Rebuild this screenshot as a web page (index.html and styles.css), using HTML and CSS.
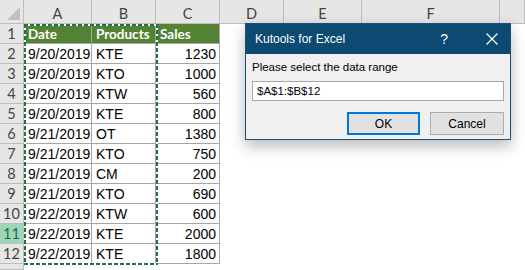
FILE: index.html
```html
<!DOCTYPE html>
<html lang="en">
<head>
  <meta charset="UTF-8">
  <meta name="viewport" content="width=device-width, initial-scale=1.0">
  <title>Kutools for Excel - Select Range</title>
  <link rel="stylesheet" href="styles.css">
</head>
<body>
  <div class="sheet">
    <!-- column headers -->
    <div class="hd corner"><span class="corner-tri"></span></div>
    <div class="hd col">A</div>
    <div class="hd col">B</div>
    <div class="hd col">C</div>
    <div class="hd col">D</div>
    <div class="hd col">E</div>
    <div class="hd col">F</div>
    <div class="hd col"></div>

    <!-- row 1 -->
    <div class="hd row">1</div>
    <div class="cell head">Date</div>
    <div class="cell head">Products</div>
    <div class="cell head">Sales</div>
    <div class="blank"></div><div class="blank"></div><div class="blank"></div><div class="blank"></div>

    <div class="hd row">2</div>
    <div class="cell">9/20/2019</div><div class="cell">KTE</div><div class="cell num">1230</div>
    <div class="blank"></div><div class="blank"></div><div class="blank"></div><div class="blank"></div>

    <div class="hd row">3</div>
    <div class="cell">9/20/2019</div><div class="cell">KTO</div><div class="cell num">1000</div>
    <div class="blank"></div><div class="blank"></div><div class="blank"></div><div class="blank"></div>

    <div class="hd row">4</div>
    <div class="cell">9/20/2019</div><div class="cell">KTW</div><div class="cell num">560</div>
    <div class="blank"></div><div class="blank"></div><div class="blank"></div><div class="blank"></div>

    <div class="hd row">5</div>
    <div class="cell">9/20/2019</div><div class="cell">KTE</div><div class="cell num">800</div>
    <div class="blank"></div><div class="blank"></div><div class="blank"></div><div class="blank"></div>

    <div class="hd row">6</div>
    <div class="cell">9/21/2019</div><div class="cell">OT</div><div class="cell num">1380</div>
    <div class="blank"></div><div class="blank"></div><div class="blank"></div><div class="blank"></div>

    <div class="hd row">7</div>
    <div class="cell">9/21/2019</div><div class="cell">KTO</div><div class="cell num">750</div>
    <div class="blank"></div><div class="blank"></div><div class="blank"></div><div class="blank"></div>

    <div class="hd row">8</div>
    <div class="cell">9/21/2019</div><div class="cell">CM</div><div class="cell num">200</div>
    <div class="blank"></div><div class="blank"></div><div class="blank"></div><div class="blank"></div>

    <div class="hd row">9</div>
    <div class="cell">9/21/2019</div><div class="cell">KTO</div><div class="cell num">690</div>
    <div class="blank"></div><div class="blank"></div><div class="blank"></div><div class="blank"></div>

    <div class="hd row">10</div>
    <div class="cell">9/22/2019</div><div class="cell">KTW</div><div class="cell num">600</div>
    <div class="blank"></div><div class="blank"></div><div class="blank"></div><div class="blank"></div>

    <div class="hd row active">11</div>
    <div class="cell">9/22/2019</div><div class="cell">KTE</div><div class="cell num">2000</div>
    <div class="blank"></div><div class="blank"></div><div class="blank"></div><div class="blank"></div>

    <div class="hd row">12</div>
    <div class="cell">9/22/2019</div><div class="cell">KTE</div><div class="cell num">1800</div>
    <div class="blank"></div><div class="blank"></div><div class="blank"></div><div class="blank"></div>

    <div class="hd row"></div>

    <!-- copy selection marquee around A1:B12 -->
    <div class="ants"></div>
  </div>

  <div class="dialog">
    <div class="dialog-title">
      <span class="dialog-name">Kutools for Excel</span>
      <span class="dialog-help">?</span>
      <svg class="dialog-close" width="12" height="12" viewBox="0 0 12 12">
        <path d="M0.5 0.5 L11.5 11.5 M11.5 0.5 L0.5 11.5" stroke="#fff" stroke-width="1.2" fill="none"/>
      </svg>
    </div>
    <div class="dialog-body">
      <label class="dialog-label">Please select the data range</label>
      <div class="dialog-input">$A$1:$B$12</div>
      <div class="dialog-buttons">
        <button class="btn btn-default">OK</button>
        <button class="btn">Cancel</button>
      </div>
    </div>
  </div>
</body>
</html>
```

FILE: styles.css
```css
html, body {
  margin: 0;
  height: 100%;
  background: #fff;
  overflow: hidden;
}

.sheet {
  position: relative;
  height: 270px;
  display: grid;
  grid-template-columns: 24px 68px 64px 64px 64px 78px 138px 1fr;
  grid-template-rows: 24px repeat(12, 20px) 1fr;
  font-family: "Liberation Sans", Arial, sans-serif;
  font-size: 14px;
  color: #000;
}

.hd {
  box-sizing: border-box;
  background: #e6e6e6;
  color: #444;
  font-family: Lato, "Liberation Sans", sans-serif;
  font-size: 14.5px;
  border-right: 1px solid #bdbdbd;
  border-bottom: 1px solid #bdbdbd;
  display: flex;
  align-items: center;
  justify-content: center;
}

.hd.col {
  padding-top: 3px;
}

.hd.corner {
  position: relative;
}

.corner-tri {
  position: absolute;
  right: 3px;
  bottom: 3px;
  width: 0;
  height: 0;
  border-left: 13px solid transparent;
  border-bottom: 13px solid #c0c0c0;
}

.hd.row.active {
  background: #9fd5b7;
  color: #1e6b41;
}

.cell {
  box-sizing: border-box;
  border-right: 1px solid #a6a6a6;
  border-bottom: 1px solid #a6a6a6;
  padding: 1px 3px 0 4px;
  display: flex;
  align-items: center;
  white-space: nowrap;
  overflow: hidden;
}

.cell.head {
  background: #548235;
  color: #fff;
  font-family: Lato, "Liberation Sans", sans-serif;
  font-weight: bold;
  font-size: 13.5px;
}

.cell.num {
  justify-content: flex-end;
}

.blank {
  background: #fff;
}

/* marching ants: green dashes over white */
.ants {
  position: absolute;
  left: 24px;
  top: 24px;
  width: 134px;
  height: 241px;
  background:
    repeating-linear-gradient(90deg, #217346 0 4px, #fff 4px 6px) left top / 100% 2px no-repeat,
    repeating-linear-gradient(90deg, #217346 0 4px, #fff 4px 6px) left bottom / 100% 2px no-repeat,
    repeating-linear-gradient(180deg, #217346 0 4px, #fff 4px 6px) left top / 2px 100% no-repeat,
    repeating-linear-gradient(180deg, #217346 0 4px, #fff 4px 6px) right top / 2px 100% no-repeat;
}

/* dialog window over the sheet */
.dialog {
  position: absolute;
  left: 245px;
  top: 23px;
  width: 266px;
  height: 117px;
  box-sizing: border-box;
  border: 1px solid #1b5078;
  background: #f0f0f0;
  box-shadow: 0 6px 14px rgba(0, 0, 0, 0.28);
  font-family: "Liberation Sans", Arial, sans-serif;
  font-size: 11.5px;
  display: flex;
  flex-direction: column;
}

.dialog-title {
  height: 30px;
  background: #0c4a72;
  color: #fff;
  display: flex;
  align-items: center;
  padding: 0 12px 0 9px;
  font-size: 12px;
}

.dialog-name {
  flex: 1;
}

.dialog-help {
  margin-right: 38px;
  font-size: 14px;
}

.dialog-body {
  flex: 1;
  padding: 6px 6px 0 6px;
  display: flex;
  flex-direction: column;
}

.dialog-label {
  line-height: 15px;
  margin-bottom: 6px;
}

.dialog-input {
  height: 20px;
  box-sizing: border-box;
  border: 1px solid #a8a8a8;
  background: #fff;
  padding: 0 4px;
  display: flex;
  align-items: center;
}

.dialog-buttons {
  display: flex;
  justify-content: flex-end;
  gap: 10px;
  margin-top: 11px;
}

.btn {
  width: 74px;
  height: 23px;
  box-sizing: border-box;
  border: 1px solid #adadad;
  background: #e1e1e1;
  font-family: inherit;
  font-size: 12px;
  color: #000;
  padding: 0;
}

.btn-default {
  border: 2px solid #0078d7;
  width: 73px;
}
```
